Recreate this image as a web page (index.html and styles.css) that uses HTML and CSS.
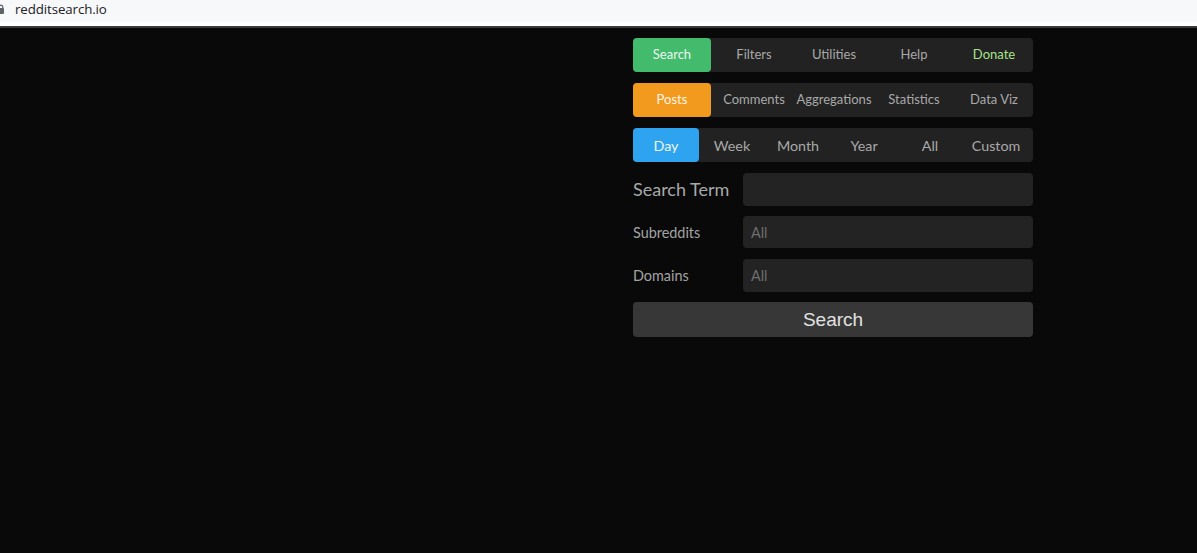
FILE: index.html
```html
<!DOCTYPE html>
<html lang="en">
<head>
<meta charset="utf-8">
<title>redditsearch.io</title>
<link rel="stylesheet" href="styles.css">
</head>
<body>
<header class="chrome">
  <svg class="lock" width="6" height="10" viewBox="0 0 6 10"><rect x="0" y="4" width="6" height="6" rx="1" fill="#5f6368"/><path d="M1.2 4.5V3a1.8 1.8 0 0 1 3.6 0v1.5" fill="none" stroke="#5f6368" stroke-width="1.2"/></svg>
  <span class="url">redditsearch.io</span>
</header>
<div class="chrome-edge"></div>
<main class="page">
  <div class="spacer"></div>
  <section class="panel">
    <nav class="tabs tabs-5">
      <span class="tab active green">Search</span>
      <span class="tab">Filters</span>
      <span class="tab">Utilities</span>
      <span class="tab">Help</span>
      <span class="tab donate">Donate</span>
    </nav>
    <nav class="tabs tabs-5">
      <span class="tab active orange">Posts</span>
      <span class="tab">Comments</span>
      <span class="tab">Aggregations</span>
      <span class="tab">Statistics</span>
      <span class="tab">Data Viz</span>
    </nav>
    <nav class="tabs tabs-6 time">
      <span class="tab active blue">Day</span>
      <span class="tab">Week</span>
      <span class="tab">Month</span>
      <span class="tab">Year</span>
      <span class="tab">All</span>
      <span class="tab">Custom</span>
    </nav>
    <div class="field field-big">
      <label class="label">Search Term</label>
      <div class="input"></div>
    </div>
    <div class="field field-sub">
      <label class="label">Subreddits</label>
      <div class="input"><span class="ph">All</span></div>
    </div>
    <div class="field field-dom">
      <label class="label">Domains</label>
      <div class="input"><span class="ph">All</span></div>
    </div>
    <button class="submit">Search</button>
  </section>
</main>
</body>
</html>
```

FILE: styles.css
```css
html, body {
  margin: 0;
  padding: 0;
}
body {
  background: #090909;
  width: 1197px;
  height: 553px;
  overflow: hidden;
  font-family: Lato, "Open Sans", sans-serif;
}
.chrome {
  height: 22px;
  background: #f7f8fa;
  display: flex;
  align-items: center;
  gap: 11px;
  padding-bottom: 4px;
  box-sizing: border-box;
}
.lock {
  margin-left: -2px;
}
.url {
  font-family: "Open Sans", "Noto Sans", sans-serif;
  font-size: 13.3px;
  color: #202124;
  letter-spacing: -0.1px;
}
.chrome-edge {
  height: 4px;
  background: #ffffff;
  border-bottom: 2px solid #3a3a3a;
}
.page {
  display: flex;
  padding-top: 10px;
}
.spacer {
  width: 633px;
  flex: none;
}
.panel {
  width: 400px;
  display: flex;
  flex-direction: column;
  gap: 11px;
}
.tabs {
  display: grid;
  height: 34px;
  background: #222222;
  border-radius: 4px;
}
.tabs-5 { grid-template-columns: repeat(5, 80px); }
.tabs-5 .tab.active { width: 78px; }
.tabs-5 .tab:not(.active) { padding-left: 2px; }
.tabs-6 { grid-template-columns: repeat(6, 66px); }
.tab {
  display: flex;
  align-items: center;
  justify-content: center;
  font-size: 13px;
  color: #a9a9a9;
  white-space: nowrap;
  border-radius: 4px;
  padding-bottom: 2px;
  box-sizing: border-box;
}
.time .tab {
  font-size: 14.3px;
  padding-bottom: 0;
}
.tab.active { color: #eef5ee; }
.green { background: #42bb6d; }
.orange { background: #f29a1d; color: #fff6e8 !important; }
.blue { background: #2ea4f0; }
.donate { color: #a8e38a; }
.field {
  display: grid;
  grid-template-columns: 110px 1fr;
  align-items: center;
}
.field-big { height: 33px; }
.field-sub { height: 32px; margin-top: -1px; }
.field-dom { height: 33px; }
.label {
  font-size: 14.4px;
  color: #a4a4a4;
}
.field-big .label {
  font-size: 18px;
  color: #a8a8a8;
  padding-bottom: 2px;
}
.input {
  height: 100%;
  background: #232323;
  border-radius: 4px;
  display: flex;
  align-items: center;
  padding-left: 8px;
}
.ph {
  font-size: 14.4px;
  color: #6e6e6e;
}
.submit {
  height: 35px;
  background: #373737;
  border: none;
  border-radius: 4px;
  color: #e2e2e2;
  font-family: "Liberation Sans", Arial, sans-serif;
  font-size: 19px;
  padding: 0;
  margin-top: -1px;
}
```
